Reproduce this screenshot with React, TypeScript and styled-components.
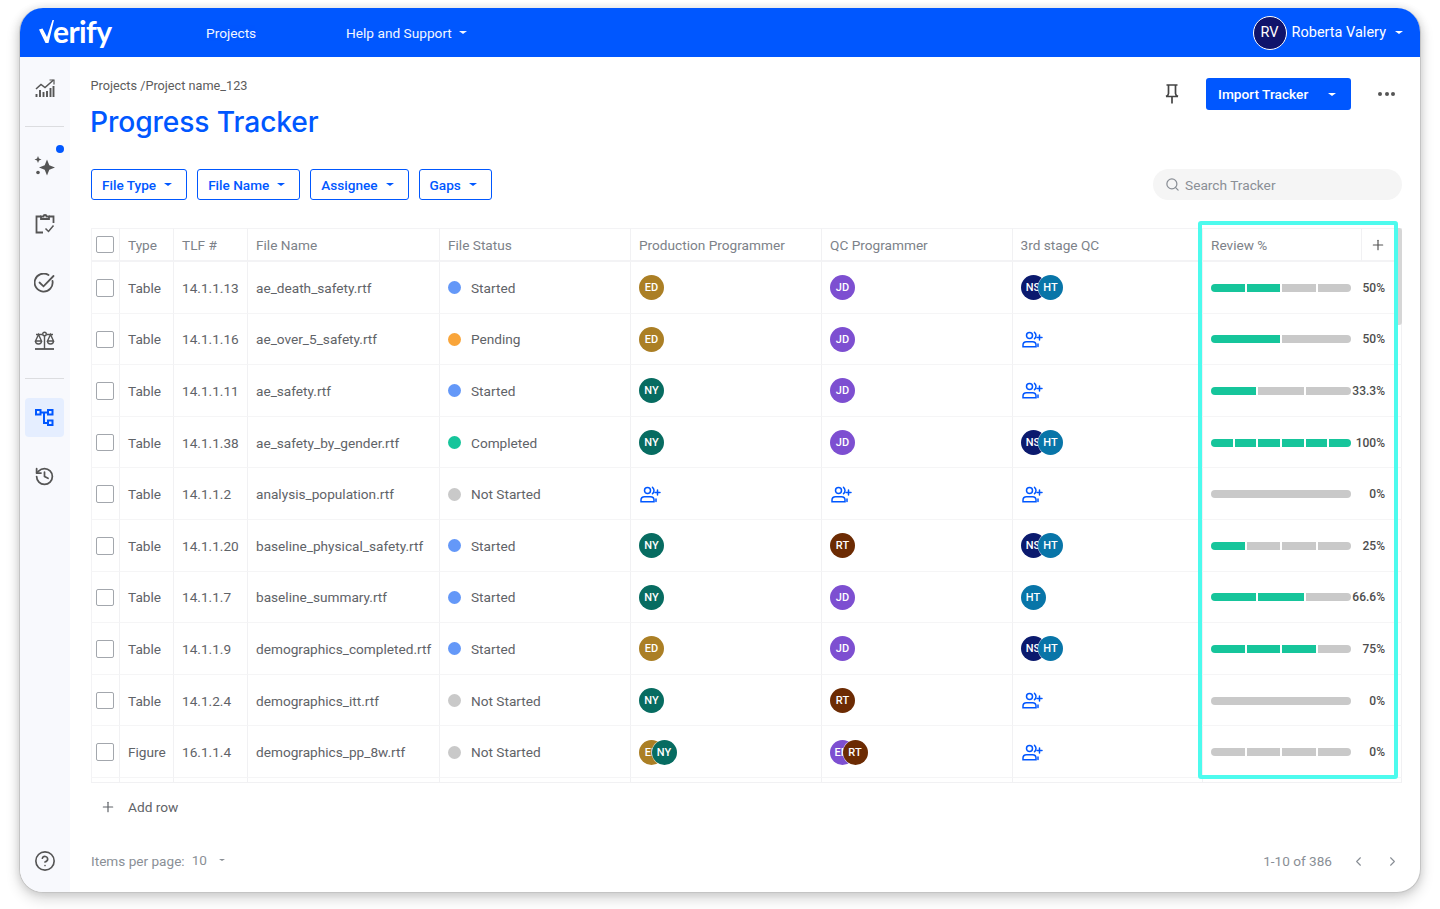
import styled, { createGlobalStyle } from "styled-components";
import { ChevronLeft, ChevronRight, CircleHelp, History, Plus, Search } from "lucide-react";

const BLUE = "#0057ff";

const GlobalStyle = createGlobalStyle`
  html, body {
    margin: 0;
    background: #fff;
    font-family: Roboto, "Liberation Sans", sans-serif;
  }
`;

const Page = styled.div`
  width: 1440px;
  height: 909px;
  padding: 8px 19px 16px 19px;
  box-sizing: border-box;
  overflow: hidden;
`;

const Frame = styled.div`
  height: 885px;
  display: flex;
  flex-direction: column;
  background: #fff;
  border-radius: 24px;
  overflow: hidden;
  box-sizing: border-box;
  border: 1px solid #c4c4c4;
  border-top: none;
  box-shadow: 0 6px 14px rgba(0, 0, 0, 0.16), -2px 0 8px rgba(0, 0, 0, 0.06), 2px 0 8px rgba(0, 0, 0, 0.06);
`;

const TopBar = styled.header`
  height: 49px;
  flex: none;
  background: ${BLUE};
  display: flex;
  align-items: center;
  padding: 0 17px 0 19px;
  color: #fff;
  font-size: 13.7px;
`;

const Logo = styled.div`
  width: 167px;
  display: flex;
  align-items: center;
  font-family: Lato, sans-serif;
  font-weight: 700;
  font-size: 30px;
  letter-spacing: -0.6px;
  line-height: 1;
  margin-top: -3px;
`;

const LogoTick = styled.svg`
  width: 15px;
  height: 24px;
  margin-right: -1px;
  margin-top: 1px;
`;

const NavLink = styled.span<{ $width: number }>`
  width: ${({ $width }) => $width}px;
  display: flex;
  align-items: center;
  gap: 7px;
  opacity: 0.95;
`;

const Caret = styled.i<{ $color?: string; $size?: number }>`
  display: inline-block;
  width: 0;
  height: 0;
  border-left: ${({ $size }) => $size ?? 4}px solid transparent;
  border-right: ${({ $size }) => $size ?? 4}px solid transparent;
  border-top: ${({ $size }) => ($size ?? 4) - 0.5}px solid ${({ $color }) => $color ?? "#fff"};
  flex: none;
`;

const UserMenu = styled.div`
  margin-left: auto;
  display: flex;
  align-items: center;
  font-size: 14.5px;
`;

const UserAvatar = styled.div`
  width: 34px;
  height: 34px;
  border-radius: 50%;
  border: 1px solid #fff;
  box-sizing: border-box;
  background: #10146b;
  display: flex;
  align-items: center;
  justify-content: center;
  font-size: 14.5px;
  margin-right: 5px;
`;

const UserCaret = styled.span`
  margin-left: 9px;
  display: flex;
`;

const Body = styled.div`
  flex: 1;
  display: flex;
  min-height: 0;
`;

const Sidebar = styled.nav`
  width: 50px;
  flex: none;
  background: #f8f9fd;
  display: flex;
  flex-direction: column;
  align-items: center;
  color: #555;
  padding-top: 12px;
  box-sizing: border-box;
`;

const NavItem = styled.div<{ $active?: boolean; $gap: number }>`
  width: 39px;
  height: 39px;
  flex: none;
  margin-bottom: ${({ $gap }) => $gap}px;
  margin-left: -1px;
  border-radius: 4px;
  display: flex;
  align-items: center;
  justify-content: center;
  position: relative;
  background: ${({ $active }) => ($active ? "#e5eeff" : "transparent")};
  color: ${({ $active }) => ($active ? BLUE : "#555")};
`;

const NavDot = styled.span`
  position: absolute;
  top: -1px;
  right: 0;
  width: 8px;
  height: 8px;
  border-radius: 50%;
  background: ${BLUE};
`;

const NavRule = styled.div<{ $gap: number }>`
  width: 39px;
  height: 1px;
  flex: none;
  margin-left: -1px;
  background: #dcdde0;
  margin-bottom: ${({ $gap }) => $gap}px;
`;

const HelpItem = styled.div`
  margin-top: auto;
  margin-bottom: 20px;
  margin-left: -1px;
  display: flex;
`;

const Main = styled.main`
  flex: 1;
  min-width: 0;
  padding: 19px 18px 0 21px;
  display: flex;
  flex-direction: column;
`;

const PageHeader = styled.div`
  height: 93px;
  flex: none;
  display: flex;
  justify-content: space-between;
  align-items: flex-start;
`;

const Breadcrumb = styled.div`
  font-size: 12.7px;
  line-height: 20px;
  color: #5c5c5c;
  margin-left: -0.5px;
`;

const Title = styled.h1`
  margin: 6px 0 0 -1px;
  font-family: Inter, sans-serif;
  font-weight: 500;
  font-size: 28.2px;
  line-height: 40px;
  letter-spacing: -0.1px;
  color: ${BLUE};
`;

const HeaderActions = styled.div`
  display: flex;
  align-items: center;
  margin-top: 2px;
  margin-right: 7px;
`;

const PinButton = styled.span`
  display: flex;
  margin-right: 27px;
  color: #444;
`;

const ImportButton = styled.button`
  width: 145px;
  height: 32px;
  border: none;
  border-radius: 3px;
  background: ${BLUE};
  color: #fff;
  font: 500 13.7px Roboto, sans-serif;
  display: flex;
  align-items: center;
  justify-content: space-between;
  padding: 0 15px 0 12px;
`;

const MoreDots = styled.span`
  display: flex;
  gap: 2.5px;
  margin-left: 27px;
`;

const MoreDot = styled.i`
  width: 4px;
  height: 4px;
  border-radius: 50%;
  background: #555;
`;

const FilterRow = styled.div`
  height: 31px;
  flex: none;
  display: flex;
  align-items: center;
  gap: 10px;
  margin-bottom: 28px;
`;

const FilterButton = styled.button`
  height: 31px;
  box-sizing: border-box;
  border: 1.5px solid ${BLUE};
  border-radius: 3px;
  background: #fff;
  color: ${BLUE};
  font: 500 13.6px Roboto, sans-serif;
  display: flex;
  align-items: center;
  gap: 8px;
  padding: 0 14px 0 10px;
`;

const SearchBox = styled.div`
  margin-left: auto;
  width: 249px;
  height: 31px;
  border-radius: 16px;
  background: #f5f5f5;
  display: flex;
  align-items: center;
  gap: 5px;
  padding-left: 12px;
  box-sizing: border-box;
  color: #8a8f96;
  font-size: 13.7px;
`;

const TableWrap = styled.div`
  position: relative;
  height: 554px;
  flex: none;
  border-bottom: 1px solid #f1f1f3;
  box-sizing: content-box;
`;

const Table = styled.table`
  width: 1311px;
  table-layout: fixed;
  border-collapse: separate;
  border-spacing: 0;
  font-size: 13.65px;
  color: #5f6368;
`;

const HeadCell = styled.th`
  height: 34px;
  padding: 0 8px;
  box-sizing: border-box;
  text-align: left;
  font-weight: 400;
  color: #7d8289;
  border-top: 1px solid #f3f3f5;
  border-bottom: 2px solid #f3f3f5;
  border-right: 1px solid #f1f1f3;
  &:first-child {
    border-left: 1px solid #f3f3f5;
  }
`;

const Cell = styled.td<{ $short?: boolean }>`
  height: ${({ $short }) => ($short ? 4 : 51.6)}px;
  padding: ${({ $short }) => ($short ? 0 : "1px 8px 0")};
  box-sizing: border-box;
  border-bottom: ${({ $short }) => ($short ? "none" : "1.5px solid #f5f5f6")};
  border-right: 1px solid #f1f1f3;
  white-space: nowrap;
  &:first-child {
    border-left: 1px solid #f3f3f5;
  }
`;

const Checkbox = styled.span`
  display: block;
  width: 17.5px;
  height: 17.5px;
  margin-left: -4px;
  box-sizing: border-box;
  border: 1.5px solid #a3a7ad;
  border-radius: 2px;
  background: #fff;
`;

const StatusWrap = styled.div`
  display: flex;
  align-items: center;
  gap: 10px;
`;

const StatusDot = styled.span<{ $color: string }>`
  width: 13px;
  height: 13px;
  border-radius: 50%;
  background: ${({ $color }) => $color};
`;

const AvatarStack = styled.div`
  display: flex;
  align-items: center;
`;

const Avatar = styled.span<{ $color: string; $shift?: number }>`
  width: 25px;
  height: 25px;
  flex: none;
  border-radius: 50%;
  overflow: hidden;
  background: ${({ $color }) => $color};
  box-shadow: 0 0 0 0.5px rgba(255, 255, 255, 0.7);
  color: #fff;
  font-size: 11px;
  font-weight: 500;
  display: flex;
  align-items: center;
  justify-content: center;
  margin-left: ${({ $shift }) => $shift ?? 0}px;
`;

const AddPerson = styled.svg`
  display: block;
  width: 21px;
  height: 17px;
  margin-left: 1px;
`;

const ReviewCell = styled.div`
  display: flex;
  align-items: center;
  justify-content: space-between;
  padding-right: 8px;
`;

const Bar = styled.div`
  width: 140px;
  height: 8px;
  display: flex;
  gap: 2px;
  border-radius: 4px;
  overflow: hidden;
`;

const Segment = styled.span<{ $done: boolean }>`
  flex: 1;
  background: ${({ $done }) => ($done ? "#16c59b" : "#c9c9c9")};
`;

const Percent = styled.span`
  font-size: 12px;
  font-weight: 500;
  color: #4d4d4d;
`;

const AddColumn = styled.span`
  display: flex;
  color: #555;
`;

const Scrollbar = styled.div`
  position: absolute;
  right: 0;
  top: 0;
  width: 5px;
  height: 97px;
  border-radius: 0 3px 3px 0;
  background: #d6d6d6;
`;

const Highlight = styled.div`
  position: absolute;
  left: 1107px;
  top: -7px;
  width: 200px;
  height: 558px;
  box-sizing: border-box;
  border: 4px solid #4dfbee;
  border-radius: 3px;
  pointer-events: none;
`;

const AddRow = styled.div`
  height: 50px;
  flex: none;
  margin-top: -1px;
  display: flex;
  align-items: center;
  gap: 12px;
  padding-left: 9px;
  font-size: 13.7px;
  color: #5f6368;
`;

const Footer = styled.div`
  flex: none;
  margin-top: 3px;
  height: 52px;
  display: flex;
  align-items: center;
  font-size: 13.6px;
  color: #8a8f96;
`;

const PageSize = styled.span`
  margin-left: 7px;
  margin-top: -2px;
`;

const SizeCaret = styled.span`
  margin-left: 12px;
  display: flex;
  margin-top: -2px;
`;

const PageInfo = styled.span`
  margin-left: auto;
  margin-right: 18px;
`;

const PageButton = styled.span`
  display: flex;
  width: 16px;
  justify-content: center;
  &:last-child {
    margin-left: 18px;
    margin-right: 2px;
  }
`;

const PEOPLE: Record<string, string> = {
  ED: "#ab7f25",
  EM: "#7d4fd1",
  JD: "#7d4fd1",
  NY: "#076c61",
  NS: "#0b1a6e",
  HT: "#0875a8",
  RT: "#6c2b03",
};

const STATUS: Record<string, string> = {
  Started: "#6498f8",
  Pending: "#f9a53a",
  Completed: "#16c59b",
  "Not Started": "#c9c9c9",
};

const COLUMNS = [29, 54, 74, 192, 191, 191, 190.5, 190.5, 159, 40];

interface RowData {
  type: string;
  tlf: string;
  file: string;
  status: string;
  prod: string[];
  qc: string[];
  third: string[];
  segments: number;
  done: number;
  percent: string;
}

const ROWS: RowData[] = [
  { type: "Table", tlf: "14.1.1.13", file: "ae_death_safety.rtf", status: "Started", prod: ["ED"], qc: ["JD"], third: ["NS", "HT"], segments: 4, done: 2, percent: "50%" },
  { type: "Table", tlf: "14.1.1.16", file: "ae_over_5_safety.rtf", status: "Pending", prod: ["ED"], qc: ["JD"], third: [], segments: 2, done: 1, percent: "50%" },
  { type: "Table", tlf: "14.1.1.11", file: "ae_safety.rtf", status: "Started", prod: ["NY"], qc: ["JD"], third: [], segments: 3, done: 1, percent: "33.3%" },
  { type: "Table", tlf: "14.1.1.38", file: "ae_safety_by_gender.rtf", status: "Completed", prod: ["NY"], qc: ["JD"], third: ["NS", "HT"], segments: 6, done: 6, percent: "100%" },
  { type: "Table", tlf: "14.1.1.2", file: "analysis_population.rtf", status: "Not Started", prod: [], qc: [], third: [], segments: 1, done: 0, percent: "0%" },
  { type: "Table", tlf: "14.1.1.20", file: "baseline_physical_safety.rtf", status: "Started", prod: ["NY"], qc: ["RT"], third: ["NS", "HT"], segments: 4, done: 1, percent: "25%" },
  { type: "Table", tlf: "14.1.1.7", file: "baseline_summary.rtf", status: "Started", prod: ["NY"], qc: ["JD"], third: ["HT"], segments: 3, done: 2, percent: "66.6%" },
  { type: "Table", tlf: "14.1.1.9", file: "demographics_completed.rtf", status: "Started", prod: ["ED"], qc: ["JD"], third: ["NS", "HT"], segments: 4, done: 3, percent: "75%" },
  { type: "Table", tlf: "14.1.2.4", file: "demographics_itt.rtf", status: "Not Started", prod: ["NY"], qc: ["RT"], third: [], segments: 1, done: 0, percent: "0%" },
  { type: "Figure", tlf: "16.1.1.4", file: "demographics_pp_8w.rtf", status: "Not Started", prod: ["ED", "NY"], qc: ["EM", "RT"], third: [], segments: 4, done: 0, percent: "0%" },
];

function People({ names, shift }: { names: string[]; shift: number }) {
  if (names.length === 0) {
    return (
      <AddPerson viewBox="0 0 21 17" fill="none" stroke={BLUE} strokeWidth="1.5" strokeLinecap="round">
        <circle cx="7.5" cy="4.5" r="3" />
        <path d="M1 15.7v-1.6c0-2 1.5-3.3 3.5-3.3h6c2 0 3.5 1.3 3.5 3.3v1.6z" />
        <path d="M12.5 1.3c2 1.6 2 4.800 0 6.400" />
        <path d="M17.500 4v5M15 6.500h5M16 13v2.500" />
      </AddPerson>
    );
  }
  return (
    <AvatarStack>
      {names.map((name, i) => (
        <Avatar key={name} $color={PEOPLE[name]} $shift={i > 0 ? shift : 0}>
          {name}
        </Avatar>
      ))}
    </AvatarStack>
  );
}

function GrowthIcon() {
  return (
    <svg width="20" height="19" viewBox="0 0 20 19" fill="none" stroke="currentColor" strokeWidth="1.5">
      <path d="M1 10l5-4.500 4 3L18.500 1" />
      <path d="M14.500 1h4.500v4.500" strokeWidth="1.2" />
      <path d="M1.500 18v-3M5 18v-7M8.500 18v-5M12 18v-6M15.500 18V9M18.500 18V7" strokeWidth="1.9" />
    </svg>
  );
}

function SparkIcon() {
  return (
    <svg width="22" height="22" viewBox="0 0 22 22" fill="currentColor">
      <path d="M13 4.500l2.300 5.700L21 12.500l-5.700 2.300L13 20.500l-2.300-5.700L5 12.500l5.700-2.300z" />
      <path d="M4 1l1 2.500L7.500 4.500 5 5.500 4 8 3 5.500.5 4.500 3 3.500z" />
      <circle cx="4" cy="17.500" r="1.800" />
    </svg>
  );
}

function ClipboardIcon() {
  return (
    <svg width="20" height="21" viewBox="0 0 20 21" fill="none" stroke="currentColor" strokeWidth="1.8">
      <path d="M6 3.500H1.500V19.500H8" />
      <path d="M14 3.500h4.500V10" />
      <path d="M6 6V3.500h2.500a1.500 1.500 0 0 1 3 0H14V6z" />
      <path d="M10.500 15.500l3 3 5-6" strokeWidth="1.500" />
    </svg>
  );
}

function CheckCircleIcon() {
  return (
    <svg width="21" height="20" viewBox="0 0 21 20" fill="none" stroke="currentColor" strokeWidth="1.8" strokeLinecap="round">
      <path d="M18.500 8A9 9 0 1 1 14.500 2" />
      <path d="M5.500 9.500l4 3.800L19.500 3" />
    </svg>
  );
}

function ScaleIcon() {
  return (
    <svg width="21" height="19" viewBox="0 0 20 19" fill="none" stroke="currentColor" strokeWidth="1.4">
      <path d="M0.500 18h19" strokeWidth="1.800" />
      <path d="M10 5v13M1.500 3.500h6M12.500 3.500h6" />
      <circle cx="10" cy="3" r="1.800" />
      <path d="M4 3.500l-3 6.500h6zM1 10a3 3 0 0 0 6 0" />
      <path d="M16 3.500l-3 6.500h6zM13 10a3 3 0 0 0 6 0" />
    </svg>
  );
}

function TreeIcon() {
  return (
    <svg width="19" height="19" viewBox="0 0 19 19" fill="none" stroke="currentColor" strokeWidth="2">
      <rect x="1" y="2" width="4.500" height="4.500" />
      <rect x="13" y="2" width="4.500" height="4.500" />
      <rect x="13" y="12.500" width="4.500" height="4.500" />
      <path d="M5.500 4.500H13M9 4.500V15H13" />
    </svg>
  );
}

function PinIcon() {
  return (
    <svg width="14" height="20" viewBox="0 0 14 20" fill="none" stroke="currentColor" strokeWidth="1.7">
      <path d="M1.500 1h11M3.500 1v8.500M10.500 1v8.500M1 12.500c1-.5 2.500-1.500 2.500-3M13 12.500c-1-.5-2.500-1.500-2.500-3M1 12.500h12M7 12.500V19.500" />
    </svg>
  );
}

export default function App() {
  return (
    <Page>
      <GlobalStyle />
      <Frame>
        <TopBar>
          <Logo>
            <LogoTick viewBox="0 0 15 24" fill="#fff">
              <path d="M0 9.500 3.500 8.500 8 17 13.500 0H15L9.500 23H6.500z" />
            </LogoTick>
            erify
          </Logo>
          <NavLink $width={140}>Projects</NavLink>
          <NavLink $width={140}>
            Help and Support <Caret />
          </NavLink>
          <UserMenu>
            <UserAvatar>RV</UserAvatar>
            Roberta Valery
            <UserCaret>
              <Caret />
            </UserCaret>
          </UserMenu>
        </TopBar>
        <Body>
          <Sidebar>
            <NavItem $gap={18}>
              <GrowthIcon />
            </NavItem>
            <NavRule $gap={19} />
            <NavItem $gap={19}>
              <NavDot />
              <SparkIcon />
            </NavItem>
            <NavItem $gap={20}>
              <ClipboardIcon />
            </NavItem>
            <NavItem $gap={19}>
              <CheckCircleIcon />
            </NavItem>
            <NavItem $gap={18}>
              <ScaleIcon />
            </NavItem>
            <NavRule $gap={19} />
            <NavItem $active $gap={20}>
              <TreeIcon />
            </NavItem>
            <NavItem $gap={0}>
              <History size={21} strokeWidth={2} />
            </NavItem>
            <HelpItem>
              <CircleHelp size={22} strokeWidth={1.8} />
            </HelpItem>
          </Sidebar>
          <Main>
            <PageHeader>
              <div>
                <Breadcrumb>Projects /Project name_123</Breadcrumb>
                <Title>Progress Tracker</Title>
              </div>
              <HeaderActions>
                <PinButton>
                  <PinIcon />
                </PinButton>
                <ImportButton>
                  Import Tracker <Caret />
                </ImportButton>
                <MoreDots>
                  <MoreDot />
                  <MoreDot />
                  <MoreDot />
                </MoreDots>
              </HeaderActions>
            </PageHeader>
            <FilterRow>
              {["File Type", "File Name", "Assignee", "Gaps"].map((label) => (
                <FilterButton key={label}>
                  {label} <Caret $color={BLUE} />
                </FilterButton>
              ))}
              <SearchBox>
                <Search size={15} strokeWidth={2} />
                Search Tracker
              </SearchBox>
            </FilterRow>
            <TableWrap>
              <Table>
                <colgroup>
                  {COLUMNS.map((width, i) => (
                    <col key={i} width={width} />
                  ))}
                </colgroup>
                <thead>
                  <tr>
                    <HeadCell>
                      <Checkbox />
                    </HeadCell>
                    <HeadCell>Type</HeadCell>
                    <HeadCell>TLF #</HeadCell>
                    <HeadCell>File Name</HeadCell>
                    <HeadCell>File Status</HeadCell>
                    <HeadCell>Production Programmer</HeadCell>
                    <HeadCell>QC Programmer</HeadCell>
                    <HeadCell>3rd stage QC</HeadCell>
                    <HeadCell>Review %</HeadCell>
                    <HeadCell>
                      <AddColumn>
                        <Plus size={16} strokeWidth={1.8} />
                      </AddColumn>
                    </HeadCell>
                  </tr>
                </thead>
                <tbody>
                  {ROWS.map((row) => (
                    <tr key={row.tlf}>
                      <Cell>
                        <Checkbox />
                      </Cell>
                      <Cell>{row.type}</Cell>
                      <Cell>{row.tlf}</Cell>
                      <Cell>{row.file}</Cell>
                      <Cell>
                        <StatusWrap>
                          <StatusDot $color={STATUS[row.status]} />
                          {row.status}
                        </StatusWrap>
                      </Cell>
                      <Cell>
                        <People names={row.prod} shift={-12.5} />
                      </Cell>
                      <Cell>
                        <People names={row.qc} shift={-12.5} />
                      </Cell>
                      <Cell>
                        <People names={row.third} shift={-7.5} />
                      </Cell>
                      <Cell colSpan={2}>
                        <ReviewCell>
                          <Bar>
                            {Array.from({ length: row.segments }, (_, i) => (
                              <Segment key={i} $done={i < row.done} />
                            ))}
                          </Bar>
                          <Percent>{row.percent}</Percent>
                        </ReviewCell>
                      </Cell>
                    </tr>
                  ))}
                  <tr>
                    {COLUMNS.slice(0, 8).map((_, i) => (
                      <Cell key={i} $short />
                    ))}
                    <Cell $short colSpan={2} />
                  </tr>
                </tbody>
              </Table>
              <Scrollbar />
              <Highlight />
            </TableWrap>
            <AddRow>
              <Plus size={16} strokeWidth={1.8} />
              Add row
            </AddRow>
            <Footer>
              Items per page:
              <PageSize>10</PageSize>
              <SizeCaret>
                <Caret $color="#8a8f96" $size={3} />
              </SizeCaret>
              <PageInfo>1-10 of 386</PageInfo>
              <PageButton>
                <ChevronLeft size={15} strokeWidth={1.8} />
              </PageButton>
              <PageButton>
                <ChevronRight size={15} strokeWidth={1.8} />
              </PageButton>
            </Footer>
          </Main>
        </Body>
      </Frame>
    </Page>
  );
}
